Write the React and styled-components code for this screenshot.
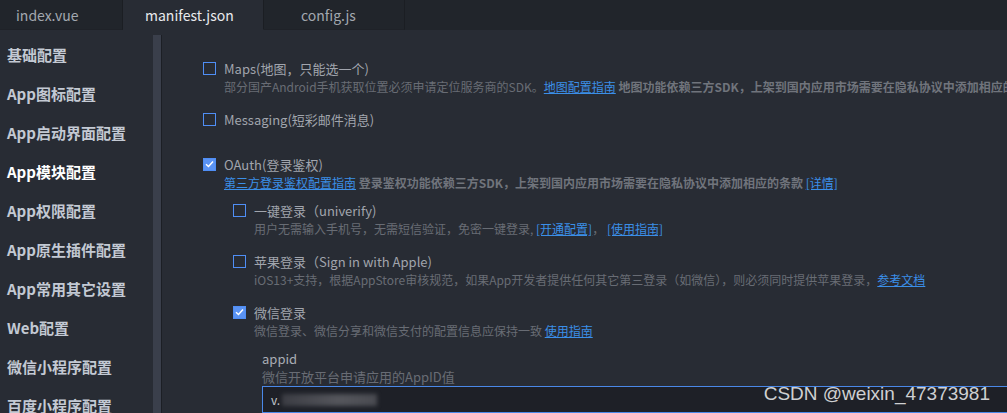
import React from "react";
import styled, { createGlobalStyle } from "styled-components";

const GlobalStyle = createGlobalStyle`
  html, body {
    margin: 0;
    padding: 0;
    background: #282c34;
    overflow: hidden;
  }
  body {
    font-family: "Noto Sans CJK SC", "Noto Sans", sans-serif;
  }
`;

const Page = styled.div`
  width: 1007px;
  height: 413px;
  display: flex;
  flex-direction: column;
  background: #282c34;
  overflow: hidden;
`;

const TabBar = styled.div`
  height: 30px;
  display: flex;
  background: #21252b;
  flex-shrink: 0;
`;

const Tab = styled.div`
  width: ${(p) => p.$width}px;
  box-sizing: border-box;
  padding-left: ${(p) => p.$pad}px;
  display: flex;
  align-items: center;
  font-size: 14px;
  color: ${(p) => (p.$active ? "#e8eaed" : "#a3a8b0")};
  background: ${(p) => (p.$active ? "#282c34" : "#21252b")};
  border-right: 1px solid #1b1e23;
  border-bottom: 1px solid ${(p) => (p.$active ? "#282c34" : "#1f2228")};
`;

const Body = styled.div`
  flex: 1;
  display: flex;
  min-height: 0;
`;

const Sidebar = styled.nav`
  width: 153px;
  flex-shrink: 0;
  padding-top: 5px;
  display: flex;
  flex-direction: column;
  overflow: hidden;
`;

const NavItem = styled.div`
  height: 39px;
  flex-shrink: 0;
  padding-left: 7px;
  display: flex;
  align-items: center;
  font-size: 15px;
  font-weight: 700;
  color: ${(p) => (p.$active ? "#ffffff" : "#c3c9d3")};
  white-space: nowrap;
`;

const ScrollTrack = styled.div`
  width: 8px;
  margin-top: 5px;
  background: #3a3f4b;
  border-right: 1px solid #1c1f25;
  flex-shrink: 0;
`;

const Content = styled.div`
  flex: 1;
  position: relative;
  padding: 29px 0 0 41px;
  overflow: hidden;
  white-space: nowrap;
`;

const Option = styled.div`
  margin-top: ${(p) => p.$top || 0}px;
  margin-left: ${(p) => p.$indent || 0}px;
`;

const LabelRow = styled.div`
  display: flex;
  align-items: center;
  gap: 8px;
  height: 18px;
  font-size: 13px;
  color: #a1a5ad;
`;

const Box = styled.span`
  width: 13px;
  height: 13px;
  box-sizing: border-box;
  border: 1px solid #4f8ef5;
  background: ${(p) => (p.$checked ? "#5a93f4" : "transparent")};
  display: inline-flex;
  align-items: center;
  justify-content: center;
  flex-shrink: 0;
`;

const Desc = styled.div`
  height: 18px;
  padding-top: 1px;
  line-height: 18px;
  padding-left: 21px;
  font-size: 12px;
  color: #686c74;
`;

const Strong = styled.span`
  font-weight: 700;
  color: #70747c;
`;

const Link = styled.a`
  color: #3b8fe8;
  text-decoration: underline;
  cursor: pointer;
`;

const Field = styled.div`
  margin-top: 10px;
  margin-left: 59px;
`;

const FieldLabel = styled.div`
  height: 18px;
  line-height: 18px;
  font-size: 13px;
  color: #a9adb4;
`;

const FieldDesc = styled.div`
  height: 18px;
  line-height: 18px;
  font-size: 13px;
  color: #686c74;
`;

const Input = styled.div`
  width: 780px;
  height: 27px;
  box-sizing: border-box;
  border: 1px solid #4a88e8;
  background: #1e2027;
  display: flex;
  align-items: center;
  padding-left: 8px;
  font-size: 12px;
  color: #c2c6cc;
`;

const Blur = styled.span`
  display: inline-block;
  width: 95px;
  height: 12px;
  margin-left: 2px;
  background: linear-gradient(90deg, #3c3d44, #55565c 60%, #4a4b51);
  filter: blur(2px);
`;

const Watermark = styled.div`
  position: absolute;
  right: 17px;
  bottom: 8px;
  font-family: "Liberation Sans", Arial, sans-serif;
  font-size: 19px;
  color: #cfd0d2;
`;

const Check = () => (
  <svg width="9" height="8" viewBox="0 0 9 8">
    <path d="M1 4.2 L3.5 6.5 L8 1.5" fill="none" stroke="#fff" strokeWidth="1.5" />
  </svg>
);

const CheckRow = ({ checked, children }) => (
  <LabelRow>
    <Box $checked={checked}>{checked && <Check />}</Box>
    <span>{children}</span>
  </LabelRow>
);

const navItems = [
  "基础配置",
  "App图标配置",
  "App启动界面配置",
  "App模块配置",
  "App权限配置",
  "App原生插件配置",
  "App常用其它设置",
  "Web配置",
  "微信小程序配置",
  "百度小程序配置",
];

export default function App() {
  return (
    <Page>
      <GlobalStyle />
      <TabBar>
        <Tab $width={123} $pad={16}>index.vue</Tab>
        <Tab $width={141} $pad={22} $active>manifest.json</Tab>
        <Tab $width={141} $pad={37}>config.js</Tab>
      </TabBar>
      <Body>
        <Sidebar>
          {navItems.map((t) => (
            <NavItem key={t} $active={t === "App模块配置"}>
              {t}
            </NavItem>
          ))}
        </Sidebar>
        <ScrollTrack />
        <Content>
          <Option>
            <CheckRow>Maps(地图，只能选一个)</CheckRow>
            <Desc>
              部分国产Android手机获取位置必须申请定位服务商的SDK。<Link>地图配置指南</Link>{" "}
              <Strong>地图功能依赖三方SDK，上架到国内应用市场需要在隐私协议中添加相应的条款</Strong>
            </Desc>
          </Option>
          <Option $top={14}>
            <CheckRow>Messaging(短彩邮件消息)</CheckRow>
          </Option>
          <Option $top={27}>
            <CheckRow checked>OAuth(登录鉴权)</CheckRow>
            <Desc>
              <Link>第三方登录鉴权配置指南</Link>{" "}
              <Strong>登录鉴权功能依赖三方SDK，上架到国内应用市场需要在隐私协议中添加相应的条款</Strong>{" "}
              <Link>[详情]</Link>
            </Desc>
          </Option>
          <Option $top={9} $indent={30}>
            <CheckRow>一键登录（univerify)</CheckRow>
            <Desc>
              用户无需输入手机号，无需短信验证，免密一键登录, <Link>[开通配置]</Link>，{"  "}
              <Link>[使用指南]</Link>
            </Desc>
          </Option>
          <Option $top={14} $indent={30}>
            <CheckRow>苹果登录（Sign in with Apple)</CheckRow>
            <Desc>
              iOS13+支持，根据AppStore审核规范，如果App开发者提供任何其它第三登录（如微信），则必须同时提供苹果登录，
              <Link>参考文档</Link>
            </Desc>
          </Option>
          <Option $top={14} $indent={30}>
            <CheckRow checked>微信登录</CheckRow>
            <Desc>
              微信登录、微信分享和微信支付的配置信息应保持一致 <Link>使用指南</Link>
            </Desc>
          </Option>
          <Field>
            <FieldLabel>appid</FieldLabel>
            <FieldDesc>微信开放平台申请应用的AppID值</FieldDesc>
            <Input>
              v.<Blur />
            </Input>
          </Field>
          <Watermark>CSDN @weixin_47373981</Watermark>
        </Content>
      </Body>
    </Page>
  );
}
